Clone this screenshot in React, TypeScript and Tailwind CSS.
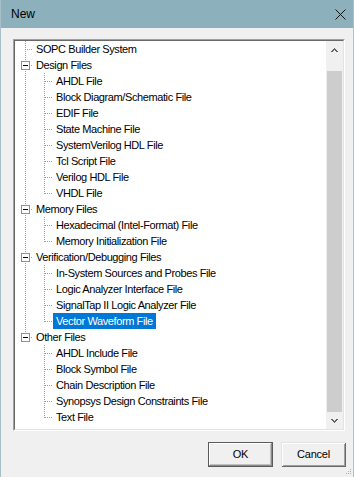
import React from "react";

type Row = { t: string; l: 0 | 1; exp?: boolean; lastSib: boolean; parentLast?: boolean; sel?: boolean };

const tree: { t: string; children?: string[] }[] = [
  { t: "SOPC Builder System" },
  {
    t: "Design Files",
    children: [
      "AHDL File",
      "Block Diagram/Schematic File",
      "EDIF File",
      "State Machine File",
      "SystemVerilog HDL File",
      "Tcl Script File",
      "Verilog HDL File",
      "VHDL File",
    ],
  },
  { t: "Memory Files", children: ["Hexadecimal (Intel-Format) File", "Memory Initialization File"] },
  {
    t: "Verification/Debugging Files",
    children: [
      "In-System Sources and Probes File",
      "Logic Analyzer Interface File",
      "SignalTap II Logic Analyzer File",
      "Vector Waveform File",
    ],
  },
  {
    t: "Other Files",
    children: [
      "AHDL Include File",
      "Block Symbol File",
      "Chain Description File",
      "Synopsys Design Constraints File",
      "Text File",
    ],
  },
];

const rows: Row[] = [];
tree.forEach((n, i) => {
  const last = i === tree.length - 1;
  rows.push({ t: n.t, l: 0, exp: !!n.children, lastSib: last });
  n.children?.forEach((c, j) => {
    rows.push({
      t: c,
      l: 1,
      lastSib: j === n.children!.length - 1,
      parentLast: last,
      sel: c === "Vector Waveform File",
    });
  });
});

const DOT = "#a0a0a0";

function vdots(x: number, y0: number, y1: number, key: string) {
  const out: React.ReactElement[] = [];
  for (let y = y0; y < y1; y++) {
    if (y % 2 === 0) out.push(<rect key={key + y} x={x} y={y} width={1} height={1} fill={DOT} />);
  }
  return out;
}
function hdots(y: number, x0: number, x1: number, key: string) {
  const out: React.ReactElement[] = [];
  for (let x = x0; x < x1; x++) {
    if (x % 2 === 0) out.push(<rect key={key + x} x={x} y={y} width={1} height={1} fill={DOT} />);
  }
  return out;
}

function Gutter({ r }: { r: Row }) {
  const w = r.l === 0 ? 18 : 38;
  const els: React.ReactElement[] = [];
  if (r.l === 0) {
    if (r.exp) {
      els.push(...vdots(10, 0, 4, "a"));
      if (!r.lastSib) els.push(...vdots(10, 13, 16, "b"));
      els.push(...hdots(8, 16, 18, "h"));
      els.push(<rect key="box" x={6} y={4} width={8} height={8} fill="#fff" stroke="#919191" strokeWidth={1} transform="translate(0.5 0.5)" />);
      els.push(<rect key="minus" x={8} y={8} width={5} height={1} fill="#000" />);
    } else {
      els.push(...vdots(10, 0, r.lastSib ? 9 : 16, "a"));
      els.push(...hdots(8, 11, 18, "h"));
    }
  } else {
    if (!r.parentLast) els.push(...vdots(10, 0, 16, "r"));
    els.push(...vdots(29, 0, r.lastSib ? 9 : 16, "c"));
    els.push(...hdots(8, 30, 38, "h"));
  }
  return (
    <svg width={w} height={16} className="shrink-0" shapeRendering="crispEdges">
      {els}
    </svg>
  );
}

function Chevron({ up }: { up: boolean }) {
  return (
    <svg width={7} height={4} viewBox="0 0 7 4" shapeRendering="crispEdges">
      {up ? (
        <path d="M3 0h1v1h1v1h1v1h1v1h-2v-1h-1v-1h-1v1h-1v1h-2v-1h1v-1h1v-1h1z" fill="#606060" />
      ) : (
        <path d="M0 0h2v1h1v1h1v-1h1v-1h2v1h-1v1h-1v1h-1v1h-1v-1h-1v-1h-1v-1h-1z" fill="#606060" />
      )}
    </svg>
  );
}

export default function App() {
  const font = { fontFamily: '"Liberation Sans", Arial, sans-serif' };
  return (
    <div className="relative w-[354px] h-[477px] bg-[#f0f0f0] border-x border-[#a9c0c9] flex flex-col overflow-hidden" style={font}>
      {/* Title bar */}
      <div className="h-[28px] bg-[#8cb0bc] flex items-center justify-between -mx-px pl-[11px] pr-[8px] shrink-0">
        <span className="text-[12px] leading-[14px] text-black">New</span>
        <svg width={11} height={11} viewBox="0 0 11 11">
          <path d="M0.5 0.5L10.5 10.5M10.5 0.5L0.5 10.5" stroke="#111" strokeWidth={1} />
        </svg>
      </div>

      {/* Tree view */}
      <div className="mt-[11px] ml-[12px] mr-[8px] h-[392px] flex border-[1px] border-t-[#a0a0a0] border-l-[#a0a0a0] border-b-white border-r-white">
        <div className="flex-1 flex border-[1px] border-t-[#696969] border-l-[#696969] border-b-[#e3e3e3] border-r-[#e3e3e3] bg-white">
          <div className="flex-1 flex flex-col overflow-hidden">
            {rows.map((r, i) => (
              <div key={i} className="h-[16px] flex items-center shrink-0">
                <Gutter r={r} />
                <span
                  className={
                    "h-[16px] leading-[16px] px-[3px] text-[11px] tracking-[-0.4px] whitespace-nowrap " +
                    (r.sel ? "bg-[#0078d7] text-white" : "text-black")
                  }
                >
                  {r.t}
                </span>
              </div>
            ))}
          </div>
          {/* Scrollbar */}
          <div className="w-[17px] bg-[#f0f0f0] flex flex-col shrink-0">
            <div className="h-[17px] flex items-center justify-center">
              <Chevron up />
            </div>
            <div className="h-[13px]" />
            <div className="flex-1 bg-[#cdcdcd] mx-px" />
            <div className="h-[17px] flex items-center justify-center">
              <Chevron up={false} />
            </div>
          </div>
        </div>
      </div>

      {/* Buttons */}
      <div className="mt-[11px] flex justify-end gap-[8px] mr-[7px]">
        <button className="w-[65px] h-[25px] bg-[#f0f0f0] text-[11px] tracking-[-0.2px] text-black shadow-[inset_0_0_0_1px_#5a5a5a,inset_-2px_-2px_#8a8a8a,inset_2px_2px_#ffffff,inset_-3px_-3px_#c0c0c0]">
          OK
        </button>
        <button className="w-[65px] h-[25px] bg-[#f0f0f0] text-[11px] tracking-[-0.2px] text-black shadow-[inset_1px_1px_#e3e3e3,inset_-1px_-1px_#696969,inset_2px_2px_#ffffff,inset_-2px_-2px_#a0a0a0]">
          Cancel
        </button>
      </div>

      {/* Size grip */}
      <svg width={8} height={8} className="absolute right-[1px] bottom-[1px]" shapeRendering="crispEdges">
        <rect x={6} y={1} width={1} height={1} fill="#b0b0b0" />
        <rect x={4} y={3} width={1} height={1} fill="#b0b0b0" />
        <rect x={6} y={3} width={1} height={1} fill="#b0b0b0" />
        <rect x={2} y={5} width={1} height={1} fill="#b0b0b0" />
        <rect x={4} y={5} width={1} height={1} fill="#b0b0b0" />
        <rect x={6} y={5} width={1} height={1} fill="#b0b0b0" />
      </svg>
    </div>
  );
}
